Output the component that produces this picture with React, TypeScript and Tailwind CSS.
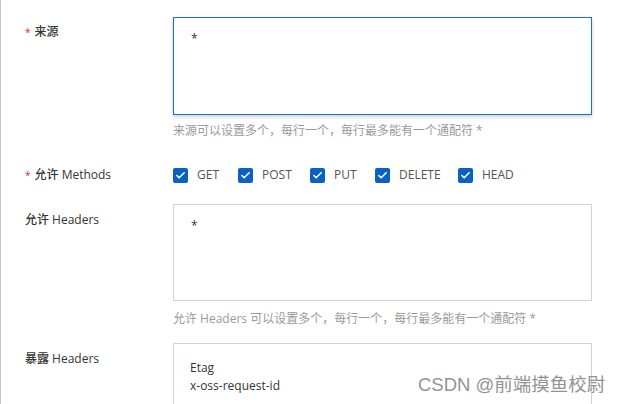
import { Check } from "lucide-react"

const methods = [
  { name: "GET", w: "w-[65px]" },
  { name: "POST", w: "w-[72px]" },
  { name: "PUT", w: "w-[65px]" },
  { name: "DELETE", w: "w-[83px]" },
  { name: "HEAD", w: "w-[70px]" },
]

const font = { fontFamily: '"Open Sans", "Noto Sans CJK SC", sans-serif' }

function Label({ text, required }: { text: string; required?: boolean }) {
  return (
    <div className="w-[172px] shrink-0 pl-[24px] text-[12px] leading-[18px] font-medium text-[#333]">
      {required && <span className="text-[#e0242f] mr-[4px] text-[10px]">*</span>}
      {text}
    </div>
  )
}

export default function App() {
  return (
    <div
      className="relative w-[624px] h-[404px] overflow-hidden bg-white border-l border-[#c8c8c8]"
      style={font}
    >
      <div className="pt-[17px] flex flex-col">
        {/* 来源 */}
        <div className="flex">
          <div className="pt-[6px]">
            <Label text="来源" required />
          </div>
          <div className="w-[419px]">
            <div className="h-[98px] border border-[#1a6ccf] shadow-[0_2px_4px_rgba(0,0,0,0.18)] px-[17px] py-[12px] text-[12px] leading-[18px] text-[#333]">
              *
            </div>
            <div className="mt-[7px] text-[12px] leading-[17px] text-[#9a9a9a]">
              来源可以设置多个，每行一个，每行最多能有一个通配符 *
            </div>
          </div>
        </div>

        {/* Methods */}
        <div className="flex items-center mt-[27px]">
          <Label text="允许 Methods" required />
          <div className="flex items-center">
            {methods.map((m) => (
              <div key={m.name} className={`flex items-center ${m.w}`}>
                <div className="w-[15px] h-[15px] rounded-[2px] bg-[#0b60c4] flex items-center justify-center">
                  <Check className="w-[11px] h-[11px] text-white" strokeWidth={3.5} />
                </div>
                <span className="ml-[9px] text-[12px] leading-[18px] text-[#555]">{m.name}</span>
              </div>
            ))}
          </div>
        </div>

        {/* 允许 Headers */}
        <div className="flex mt-[20px]">
          <div className="pt-[7px]">
            <Label text="允许 Headers" />
          </div>
          <div className="w-[419px]">
            <div className="h-[97px] border border-[#cfd3d8] px-[17px] py-[12px] text-[12px] leading-[18px] text-[#333]">
              *
            </div>
            <div className="mt-[9px] text-[12px] leading-[17px] text-[#9a9a9a]">
              允许 Headers 可以设置多个，每行一个，每行最多能有一个通配符 *
            </div>
          </div>
        </div>

        {/* 暴露 Headers */}
        <div className="flex mt-[16px]">
          <div className="pt-[7px]">
            <Label text="暴露 Headers" />
          </div>
          <div className="w-[419px]">
            <div className="h-[98px] border border-[#cfd3d8] px-[16px] py-[15px] text-[12px] leading-[18px] text-[#333]">
              <div>Etag</div>
              <div>x-oss-request-id</div>
            </div>
          </div>
        </div>
      </div>

      <div
        className="absolute left-[417px] top-[374px] text-[18.5px] leading-[22px] text-[#939393]"
        style={{ fontFamily: '"Liberation Sans", "Noto Sans CJK SC", sans-serif' }}
      >
        CSDN @前端摸鱼校尉
      </div>
    </div>
  )
}
